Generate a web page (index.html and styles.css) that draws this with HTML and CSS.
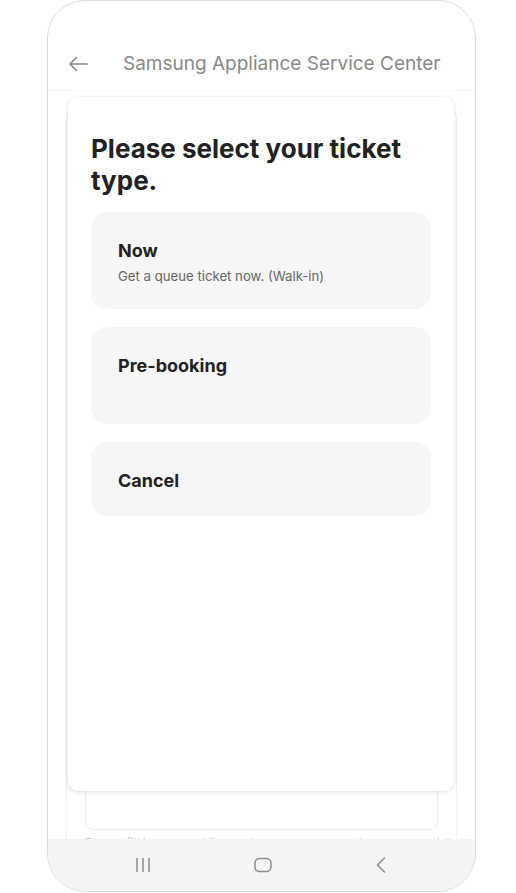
FILE: index.html
```html
<!DOCTYPE html>
<html lang="en">
<head>
<meta charset="utf-8">
<title>Samsung Appliance Service Center</title>
<link rel="stylesheet" href="styles.css">
</head>
<body>
<div class="phone">
  <div class="status"></div>
  <header class="appbar">
    <svg class="back" width="20" height="16" viewBox="0 0 20 16" aria-hidden="true">
      <path d="M19 8H2M8.5 1.5L2 8l6.5 6.5" fill="none" stroke="#8a8a8a" stroke-width="1.7" stroke-linecap="round" stroke-linejoin="round"/>
    </svg>
    <h1 class="appbar-title">Samsung Appliance Service Center</h1>
  </header>
  <main class="content">
    <div class="page">
      <div class="input-box"></div>
      <p class="note">Please fill in your mobile number so we can send your queue ticket.</p>
    </div>
  </main>
  <nav class="navbar">
    <svg width="18" height="18" viewBox="0 0 18 18" aria-hidden="true">
      <path d="M3 2v14M9 2v14M15 2v14" stroke="#8c8c8c" stroke-width="1.5" fill="none"/>
    </svg>
    <svg width="20" height="18" viewBox="0 0 20 18" aria-hidden="true">
      <rect x="2" y="2.5" width="16" height="13" rx="4.5" stroke="#8c8c8c" stroke-width="1.5" fill="none"/>
    </svg>
    <svg width="14" height="18" viewBox="0 0 14 18" aria-hidden="true">
      <path d="M10.5 2L3.5 9l7 7" stroke="#8c8c8c" stroke-width="1.5" fill="none" stroke-linecap="round" stroke-linejoin="round"/>
    </svg>
  </nav>

  <section class="sheet">
    <h2 class="sheet-title">Please select your ticket type.</h2>
    <div class="options">
      <div class="option">
        <div class="option-title">Now</div>
        <div class="option-sub">Get a queue ticket now. (Walk-in)</div>
      </div>
      <div class="option">
        <div class="option-title">Pre-booking</div>
        <div class="option-sub">&nbsp;</div>
      </div>
      <div class="option">
        <div class="option-title">Cancel</div>
      </div>
    </div>
  </section>
</div>
</body>
</html>
```

FILE: styles.css
```css
* { box-sizing: border-box; }
html, body { margin: 0; padding: 0; background: #fff; }
body { font-family: Inter, Roboto, "Liberation Sans", Arial, sans-serif; }

.phone {
  position: relative;
  margin-left: 47px;
  width: 429px;
  height: 892px;
  border: 1px solid #dcdcdc;
  border-radius: 38px;
  overflow: hidden;
  display: flex;
  flex-direction: column;
  background: #fff;
}

.status { height: 35px; flex: none; }

.appbar {
  height: 55px;
  flex: none;
  display: flex;
  align-items: center;
  padding-left: 20px;
  border-bottom: 1px solid #f6f6f6;
}
.back { flex: none; margin-top: 1px; }
.appbar-title {
  margin: 0 0 0 35px;
  font-size: 19px;
  font-weight: 400;
  color: #8a8a8a;
  white-space: nowrap;
}

.content {
  flex: 1;
  overflow: hidden;
  padding: 18px 18px 0 18px;
  display: flex;
  flex-direction: column;
}
.page {
  flex: 1;
  border: 1px solid #efefef;
  border-bottom: none;
  border-radius: 8px 8px 0 0;
  display: flex;
  flex-direction: column;
  justify-content: flex-end;
  padding: 0 18px;
}
.input-box {
  height: 70px;
  border: 1px solid #ececec;
  border-radius: 8px;
}
.note {
  margin: 5px 0 -12px 0;
  font-size: 12px;
  line-height: 16px;
  color: #c8c8c8;
  white-space: nowrap;
}

.navbar {
  height: 52px;
  flex: none;
  background: #f4f4f4;
  display: flex;
  align-items: center;
  justify-content: space-between;
  padding: 0 87px 0 86px;
}

.sheet {
  position: absolute;
  top: 96px;
  left: 20px;
  width: 386px;
  height: 694px;
  background: #fff;
  border-radius: 10px;
  box-shadow: 0 1px 4px rgba(0, 0, 0, 0.13), 0 0 1px rgba(0, 0, 0, 0.08);
  padding: 36px 23px 0 23px;
}
.sheet-title {
  margin: 0;
  font-size: 26px;
  line-height: 32px;
  font-weight: 700;
  color: #222;
  padding-right: 20px;
}
.options {
  margin-top: 15px;
  display: flex;
  flex-direction: column;
  gap: 18px;
}
.option {
  background: #f6f6f6;
  border-radius: 16px;
  padding: 28px 27px 24px 27px;
}
.option-title {
  font-size: 18px;
  line-height: 22px;
  font-weight: 700;
  color: #222;
}
.option-sub {
  margin-top: 5px;
  font-size: 13.2px;
  line-height: 18px;
  color: #666;
}
```
